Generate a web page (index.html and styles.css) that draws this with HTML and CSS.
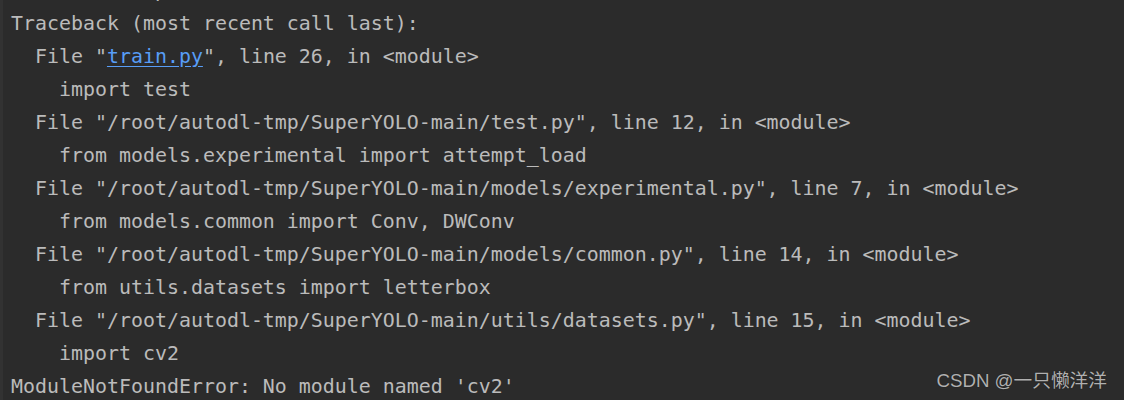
FILE: index.html
```html
<!DOCTYPE html>
<html lang="en">
<head>
<meta charset="utf-8">
<title>Traceback</title>
<link rel="stylesheet" href="styles.css">
</head>
<body>
<main class="console">
  <div class="output">
    <div class="line">            p</div>
    <div class="line">Traceback (most recent call last):</div>
    <div class="line">  File "<a class="link" href="#">train.py</a>", line 26, in &lt;module&gt;</div>
    <div class="line">    import test</div>
    <div class="line">  File "/root/autodl-tmp/SuperYOLO-main/test.py", line 12, in &lt;module&gt;</div>
    <div class="line">    from models.experimental import attempt_load</div>
    <div class="line">  File "/root/autodl-tmp/SuperYOLO-main/models/experimental.py", line 7, in &lt;module&gt;</div>
    <div class="line">    from models.common import Conv, DWConv</div>
    <div class="line">  File "/root/autodl-tmp/SuperYOLO-main/models/common.py", line 14, in &lt;module&gt;</div>
    <div class="line">    from utils.datasets import letterbox</div>
    <div class="line">  File "/root/autodl-tmp/SuperYOLO-main/utils/datasets.py", line 15, in &lt;module&gt;</div>
    <div class="line">    import cv2</div>
    <div class="line">ModuleNotFoundError: No module named 'cv2'</div>
  </div>
  <div class="watermark">CSDN @一只懒洋洋</div>
</main>
</body>
</html>
```

FILE: styles.css
```css
html, body {
  margin: 0;
  padding: 0;
  background: #2b2b2b;
  overflow: hidden;
}

.console {
  position: relative;
  width: 1124px;
  height: 400px;
  box-sizing: border-box;
  border-left: 3px solid #323232;
  padding-left: 8px;
  background: #2b2b2b;
  overflow: hidden;
}

.output {
  margin-top: -26px;
  font-family: "DejaVu Sans Mono", "Liberation Mono", monospace;
  font-size: 19.93px;
  line-height: 33px;
  color: #bbbbbb;
}

.line {
  white-space: pre;
  height: 33px;
}

.link {
  color: #589df6;
  text-decoration: underline;
  text-decoration-color: #589df6;
  text-underline-offset: 3px;
}

.watermark {
  position: absolute;
  right: 17px;
  top: 371px;
  font-family: "Liberation Sans", "Noto Sans CJK SC", sans-serif;
  font-size: 18.7px;
  line-height: 19px;
  color: #b0b0b0;
  text-shadow: 0 0 1px rgba(0, 0, 0, 0.5);
  white-space: nowrap;
}
```
